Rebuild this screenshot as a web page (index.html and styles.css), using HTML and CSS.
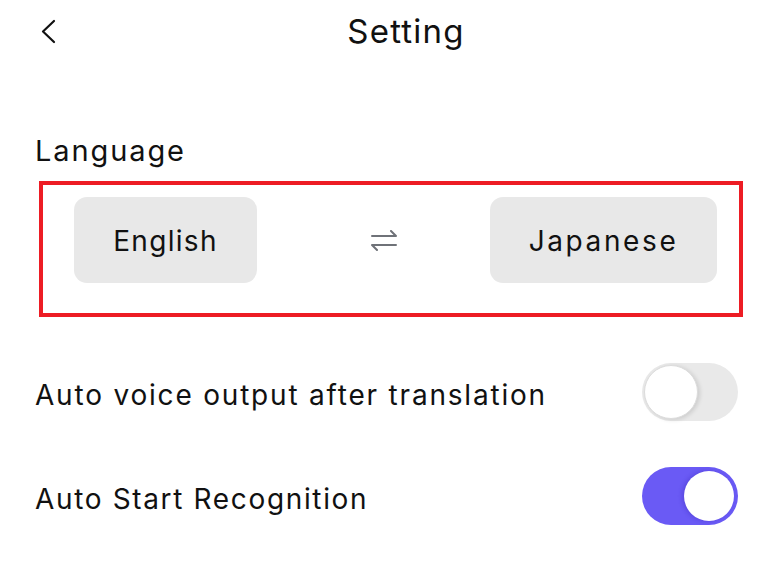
FILE: index.html
```html
<!DOCTYPE html>
<html lang="en">
<head>
<meta charset="utf-8">
<title>Setting</title>
<link rel="stylesheet" href="styles.css">
</head>
<body>
<div class="page">
  <header class="header">
    <button class="back" aria-label="Back">
      <svg width="17" height="25" viewBox="0 0 17 25"><path d="M14 2 L3 12.5 L14 23" fill="none" stroke="#111" stroke-width="2.2" stroke-linecap="round" stroke-linejoin="round"/></svg>
    </button>
    <h1 class="title">Setting</h1>
  </header>

  <div class="section-label">Language</div>

  <div class="lang-box">
    <div class="lang-btn lang-en">English</div>
    <div class="swap">
      <svg width="26" height="21" viewBox="0 0 26 21"><path d="M1 6 H25 L20 1 M25 15 H1 L6 20" fill="none" stroke="#6f7278" stroke-width="2" stroke-linecap="round" stroke-linejoin="round"/></svg>
    </div>
    <div class="lang-btn lang-ja">Japanese</div>
  </div>

  <div class="row row-first">
    <span class="row-text">Auto voice output after translation</span>
    <div class="toggle"><div class="knob"></div></div>
  </div>
  <div class="row row-second">
    <span class="row-text">Auto Start Recognition</span>
    <div class="toggle on"><div class="knob"></div></div>
  </div>
</div>
</body>
</html>
```

FILE: styles.css
```css
* { box-sizing: border-box; }
html, body { margin: 0; padding: 0; background: #ffffff; }
body {
  font-family: "Inter", "Noto Sans", "DejaVu Sans", sans-serif;
  color: #111111;
  width: 768px;
  height: 567px;
  overflow: hidden;
}
.page { display: flex; flex-direction: column; }

.header {
  height: 62px;
  display: flex;
  align-items: center;
  padding: 0 13px 0 40px;
}
.back {
  width: 17px;
  height: 25px;
  padding: 0;
  border: 0;
  background: none;
  display: flex;
}
.title {
  flex: 1;
  margin: 0;
  text-align: center;
  font-size: 33px;
  font-weight: 400;
  line-height: 1;
  letter-spacing: 1.2px;
}

.section-label {
  margin: 72px 0 0 35px;
  font-size: 29px;
  line-height: 34px;
  letter-spacing: 1.9px;
}

.lang-box {
  margin: 13px 25px 0 39px;
  border: 4px solid #ed1c24;
  padding: 12px 22px 30px 31px;
  display: flex;
  align-items: center;
}
.lang-btn {
  height: 86px;
  border-radius: 13px;
  background: #e8e8e8;
  display: flex;
  align-items: center;
  justify-content: center;
  font-size: 28px;
  letter-spacing: 1.3px;
  padding-top: 2px;
}
.lang-en { width: 183px; }
.lang-ja { width: 227px; margin-left: auto; letter-spacing: 2.6px; }
.swap { margin-left: 114px; display: flex; }

.row {
  display: flex;
  align-items: center;
  justify-content: space-between;
  height: 58px;
  padding: 0 30px 0 35px;
}
.row-first { margin-top: 46px; }
.row-second { margin-top: 46px; }
.row-text { font-size: 28px; letter-spacing: 1.8px; padding-top: 5px; }
.row-second .row-text { letter-spacing: 1.65px; }

.toggle {
  position: relative;
  width: 96px;
  height: 58px;
  border-radius: 29px;
  background: #e9e9e9;
}
.knob {
  position: absolute;
  top: 2px;
  left: 2px;
  width: 54px;
  height: 54px;
  border-radius: 50%;
  background: #ffffff;
  border: 1px solid #dcdcdc;
  box-shadow: 2px 1px 4px rgba(0,0,0,0.12);
}
.toggle.on { background: #6a5af5; }
.toggle.on .knob {
  left: auto;
  right: 4px;
  top: 4px;
  width: 50px;
  height: 50px;
  border: 0;
  box-shadow: -2px 0 4px rgba(40,20,160,0.25);
}
```
